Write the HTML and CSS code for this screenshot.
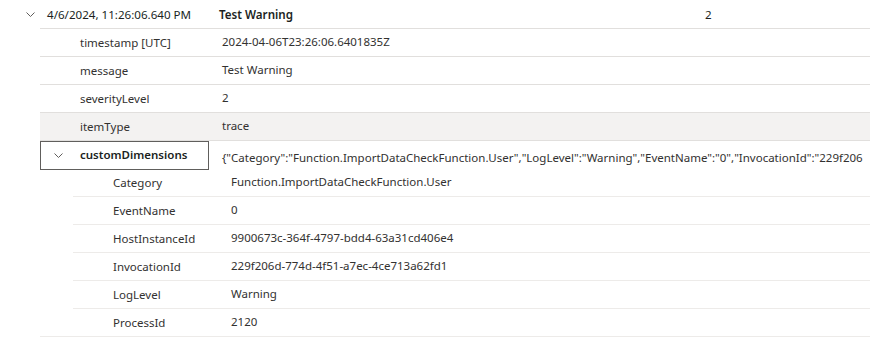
FILE: index.html
```html
<!DOCTYPE html>
<html lang="en">
<head>
  <meta charset="UTF-8">
  <title>Trace details</title>
  <link rel="stylesheet" href="styles.css">
</head>
<body>
  <div class="log">
    <div class="head-row">
      <span class="chev"><svg width="9" height="5" viewBox="0 0 9 5"><path d="M0.5 0.5 L4.5 4.5 L8.5 0.5" fill="none" stroke="#605e5c" stroke-width="1"/></svg></span>
      <span class="h-time">4/6/2024, 11:26:06.640 PM</span>
      <span class="h-msg">Test Warning</span>
      <span class="h-sev">2</span>
    </div>

    <div class="details">
      <div class="row"><span class="key">timestamp [UTC]</span><span class="val">2024-04-06T23:26:06.6401835Z</span></div>
      <div class="row"><span class="key">message</span><span class="val">Test Warning</span></div>
      <div class="row"><span class="key">severityLevel</span><span class="val">2</span></div>
      <div class="row hover"><span class="key">itemType</span><span class="val">trace</span></div>

      <div class="group">
        <div class="row group-row">
          <div class="group-key">
            <span class="chev small"><svg width="9" height="5" viewBox="0 0 9 5"><path d="M0.5 0.5 L4.5 4.5 L8.5 0.5" fill="none" stroke="#605e5c" stroke-width="1"/></svg></span>
            <span class="bold">customDimensions</span>
          </div>
          <span class="val json">{"Category":"Function.ImportDataCheckFunction.User","LogLevel":"Warning","EventName":"0","InvocationId":"229f206</span>
        </div>
        <div class="sub">
          <div class="srow"><span class="skey">Category</span><span class="sval">Function.ImportDataCheckFunction.User</span></div>
          <div class="srow"><span class="skey">EventName</span><span class="sval">0</span></div>
          <div class="srow"><span class="skey">HostInstanceId</span><span class="sval">9900673c-364f-4797-bdd4-63a31cd406e4</span></div>
          <div class="srow"><span class="skey">InvocationId</span><span class="sval">229f206d-774d-4f51-a7ec-4ce713a62fd1</span></div>
          <div class="srow"><span class="skey">LogLevel</span><span class="sval">Warning</span></div>
          <div class="srow"><span class="skey">ProcessId</span><span class="sval">2120</span></div>
        </div>
      </div>
    </div>
  </div>
</body>
</html>
```

FILE: styles.css
```css
*{margin: 0; padding: 0; box-sizing: border-box;}

body{
  background: #ffffff;
  color: #323130;
  font-family: "Noto Sans", "Open Sans", sans-serif;
  font-size: 11.5px;
  overflow: hidden;
}

.log{
  width: 870px;
}

.head-row{
  height: 28px;
  display: flex;
  align-items: center;
  color: #201f1e;
  font-size: 11.6px;
}
.chev{
  display: flex;
  align-items: center;
  flex-shrink: 0;
  width: 47px;
  padding-left: 26px;
}
.chev svg{ display: block; }
.h-time{ width: 172px; }
.h-msg{ width: 486px; font-weight: 600; }

.details{
  margin-left: 40px;
  border-bottom: 1px solid #edebe9;
}
.row{
  height: 28px;
  display: flex;
  align-items: center;
  border-top: 1px solid #e1dfdd;
  white-space: nowrap;
}
.row.hover{
  background: #f3f2f1;
}
.key{
  flex-shrink: 0;
  width: 182px;
  padding-left: 40px;
}
.val{
  padding-bottom: 3px;
}

.group-row{
  height: 29px;
}
.group-key{
  flex-shrink: 0;
  width: 169px;
  height: 29px;
  display: flex;
  align-items: center;
  border: 1px solid #605e5c;
}
.chev.small{
  width: 39px;
  padding-left: 13px;
}
.bold{
  font-weight: 600;
  color: #201f1e;
  padding-bottom: 2px;
}
.json{
  padding: 5px 0 0 13px;
  overflow: hidden;
}

.sub{
  margin-left: 33px;
}
.srow{
  height: 28px;
  display: flex;
  align-items: center;
  border-top: 1px solid #edebe9;
  white-space: nowrap;
}
.srow:first-child{
  border-top: none;
  height: 27px;
}
.skey{
  flex-shrink: 0;
  width: 158px;
  padding-left: 40px;
}
.sval{
  padding-bottom: 3px;
}
```
